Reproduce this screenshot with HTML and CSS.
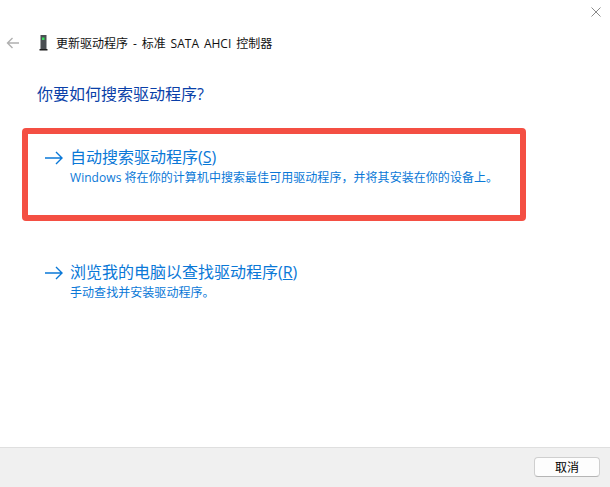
FILE: index.html
```html
<!DOCTYPE html>
<html lang="zh-CN">
<head>
    <meta charset="UTF-8">
    <title>更新驱动程序</title>
    <link rel="stylesheet" href="styles.css">
</head>
<body>
    <div class="dialog">
        <div class="title-bar">
            <svg class="close-icon" width="10" height="10" viewBox="0 0 10 10">
                <path d="M0.5 0.5L9.5 9.5M9.5 0.5L0.5 9.5" stroke="#8a8a8a" stroke-width="1" fill="none"/>
            </svg>
        </div>

        <div class="nav-row">
            <svg class="back-icon" width="14" height="12" viewBox="0 0 14 12">
                <path d="M13 6H1.5M6.5 1L1.5 6L6.5 11" stroke="#b0b0b0" stroke-width="1.4" fill="none"/>
            </svg>
            <svg class="device-icon" width="9" height="16" viewBox="0 0 9 16">
                <rect x="1.5" y="0" width="6" height="14" fill="#4a4f52"/>
                <rect x="3" y="2.5" width="2.5" height="2.5" fill="#35e05a"/>
                <rect x="0.5" y="14" width="8" height="1.5" fill="#1c1c1c"/>
            </svg>
            <span class="nav-title">更新驱动程序 - 标准 SATA AHCI 控制器</span>
        </div>

        <h1 class="heading">你要如何搜索驱动程序?</h1>

        <div class="option option-marked">
            <svg class="arrow-icon" width="18" height="14" viewBox="0 0 18 14">
                <path d="M0 7H17M11 1L17 7L11 13" stroke="#0a78d7" stroke-width="1.4" fill="none"/>
            </svg>
            <div class="option-text">
                <div class="option-title">自动搜索驱动程序(<u>S</u>)</div>
                <div class="option-desc">Windows 将在你的计算机中搜索最佳可用驱动程序，并将其安装在你的设备上。</div>
            </div>
        </div>

        <div class="option option-plain">
            <svg class="arrow-icon" width="18" height="14" viewBox="0 0 18 14">
                <path d="M0 7H17M11 1L17 7L11 13" stroke="#0a78d7" stroke-width="1.4" fill="none"/>
            </svg>
            <div class="option-text">
                <div class="option-title">浏览我的电脑以查找驱动程序(<u>R</u>)</div>
                <div class="option-desc">手动查找并安装驱动程序。</div>
            </div>
        </div>

        <div class="footer">
            <button class="cancel-button">取消</button>
        </div>
    </div>
</body>
</html>
```

FILE: styles.css
```css
html, body {
    margin: 0;
    padding: 0;
}

body {
    font-family: "Open Sans", "Noto Sans CJK SC", sans-serif;
    background-color: #fff;
    color: #000;
}

.dialog {
    width: 610px;
    height: 487px;
    display: flex;
    flex-direction: column;
    overflow: hidden;
}

.title-bar {
    height: 30px;
    display: flex;
    justify-content: flex-end;
    align-items: flex-start;
    padding: 7px 9px 0 0;
    box-sizing: border-box;
}

.nav-row {
    height: 26px;
    display: flex;
    align-items: center;
    padding-left: 6px;
}

.back-icon {
    margin-right: 19px;
}

.device-icon {
    margin-right: 8px;
}

.nav-title {
    font-size: 12px;
    line-height: 16px;
    margin-top: 1px;
    word-spacing: 1.8px;
    color: #111;
}

.heading {
    margin: 25px 0 0 37px;
    font-size: 16px;
    line-height: 26px;
    font-weight: normal;
    color: #0a3fa8;
}

.option {
    display: flex;
    align-items: flex-start;
    box-sizing: border-box;
}

.option-marked {
    margin: 21px 0 0 22px;
    width: 504px;
    height: 93px;
    padding: 12px 0 0 17px;
    border: 6px solid #f44f43;
    border-radius: 4px;
}

.option-plain {
    margin: 40px 0 0 45px;
}

.arrow-icon {
    flex-shrink: 0;
    margin: 5px 7px 0 0;
}

.option-title {
    font-size: 16px;
    line-height: 22px;
    color: #0a78d7;
}

.option-desc {
    font-size: 12px;
    line-height: 16px;
    margin-top: 2px;
    letter-spacing: 0.05px;
    color: #0a78d7;
}

.footer {
    margin-top: auto;
    height: 40px;
    box-sizing: border-box;
    background-color: #f0f0f0;
    border-top: 1px solid #dfdfdf;
    display: flex;
    justify-content: flex-end;
    align-items: flex-start;
    padding: 9px 10px 0 0;
}

.cancel-button {
    width: 66px;
    height: 20px;
    padding: 0;
    background-color: #fdfdfd;
    border: 1px solid #cfcfcf;
    border-bottom-color: #b5b5b5;
    border-radius: 4px;
    font-family: "Noto Sans CJK SC", sans-serif;
    font-size: 12px;
    line-height: 18px;
    color: #000;
}
```
